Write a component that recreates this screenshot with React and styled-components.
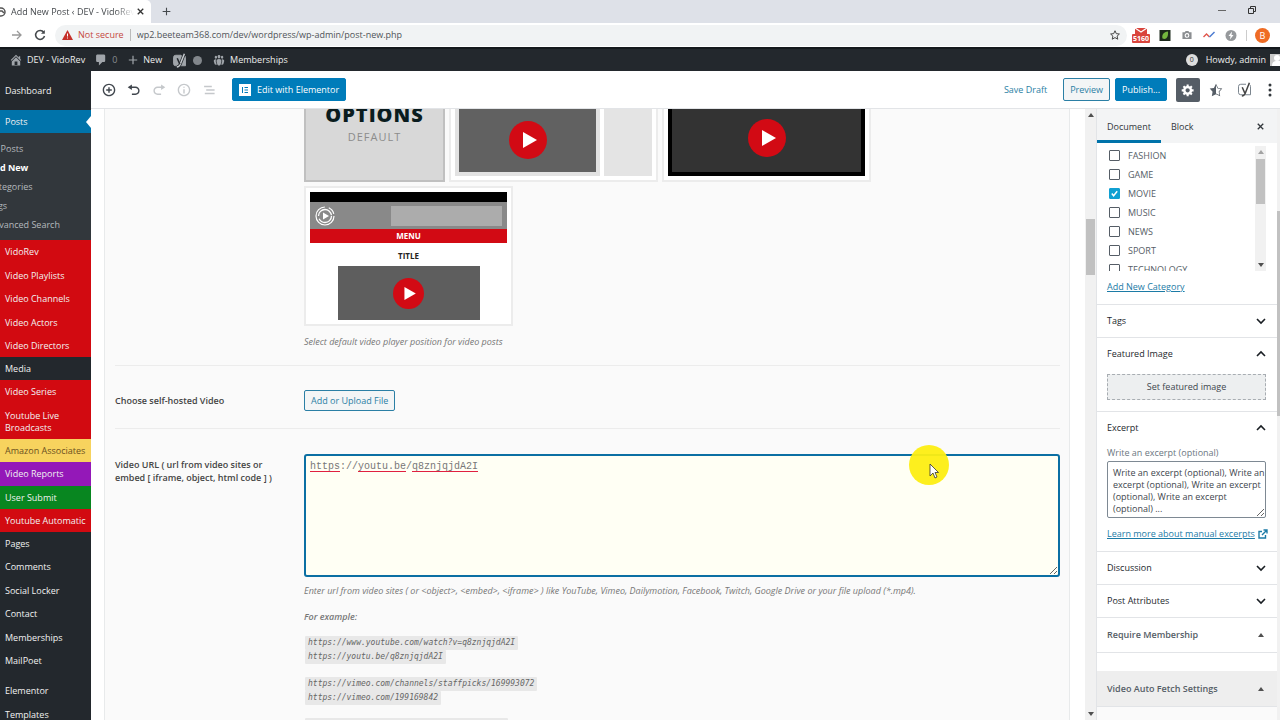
import React, { useState } from "react";
import styled, { createGlobalStyle, css } from "styled-components";

const GlobalStyle = createGlobalStyle`
  * {
    box-sizing: border-box;
  }
  body {
    margin: 0;
    font-family: "Open Sans", "Noto Sans", sans-serif;
    font-size: 9px;
    line-height: 12px;
    color: #32373c;
    background: #fff;
  }
  button, input, textarea {
    font: inherit;
    margin: 0;
  }
  button {
    padding: 0;
    border: 0;
    background: none;
    color: inherit;
  }
  svg {
    display: block;
    flex: none;
  }
`;

const ICONS = {
  undo: "M12 5H7V2L1 6l6 4V7h5c2.2 0 4 1.8 4 4s-1.8 4-4 4H7v2h5c3.3 0 6-2.7 6-6s-2.7-6-6-6z",
  redo: "M8 5h5V2l6 4-6 4V7H8c-2.2 0-4 1.8-4 4s1.8 4 4 4h5v2H8c-3.3 0-6-2.7-6-6s2.7-6 6-6z",
  insert:
    "M10 1c-5 0-9 4-9 9s4 9 9 9 9-4 9-9-4-9-9-9zm0 16c-3.9 0-7-3.1-7-7s3.1-7 7-7 7 3.1 7 7-3.1 7-7 7zm1-11H9v3H6v2h3v3h2v-3h3V9h-3V6z",
  info: "M9 15h2V9H9v6zm1-10c-.5 0-1 .5-1 1s.5 1 1 1 1-.5 1-1-.5-1-1-1zm0-4c-5 0-9 4-9 9s4 9 9 9 9-4 9-9-4-9-9-9zm0 16c-3.9 0-7-3.1-7-7s3.1-7 7-7 7 3.1 7 7-3.1 7-7 7z",
  outline: "M3 4h11v2H3zM6 9h12v2H6zM4 14h14v2H4z",
  close:
    "M14.95 6.46L11.41 10l3.54 3.54-1.41 1.41L10 11.42l-3.53 3.53-1.42-1.42L8.58 10 5.05 6.47l1.42-1.42L10 8.58l3.54-3.53z",
  gear: "M18 12h-2.18c-.17.7-.44 1.35-.81 1.93l1.54 1.54-2.1 2.1-1.54-1.54c-.58.36-1.23.63-1.91.79V19H8v-2.18c-.68-.16-1.33-.43-1.91-.79l-1.54 1.54-2.12-2.12 1.54-1.54c-.36-.58-.63-1.23-.79-1.91H1V9.03h2.17c.16-.7.44-1.35.8-1.94L2.43 5.55l2.1-2.1 1.54 1.54c.58-.37 1.24-.64 1.93-.81V2h3v2.18c.68.16 1.33.43 1.91.79l1.54-1.54 2.12 2.12-1.54 1.54c.36.59.64 1.24.8 1.94H18V12zm-8.5 1.5c1.66 0 3-1.34 3-3s-1.34-3-3-3-3 1.34-3 3 1.34 3 3 3z",
  starHalf:
    "M10 1L7 7l-6 .75 4.13 4.62L4 19l6-3 6 3-1.12-6.63L19 7.75 13 7zm0 2.24l2.34 4.69 4.65.58-3.18 3.56.87 5.15L10 14.88V3.24z",
  home: "M16 8.5l1.53 1.53-1.06 1.06L10 4.6l-6.47 6.49-1.06-1.06L10 2.5l4 4v-2h2v4zm-6-2.46l6 5.99V18H4v-5.97zM12 17v-5H8v5h4z",
  comment: "M5 2h9c1.1 0 2 .9 2 2v7c0 1.1-.9 2-2 2h-2l-5 5v-5H5c-1.1 0-2-.9-2-2V4c0-1.1.9-2 2-2z",
  plus: "M17 9v2h-6v6H9v-6H3V9h6V3h2v6h6z",
  groups:
    "M8.03 4.46c-.29 1.28.55 3.46 1.97 3.46 1.41 0 2.25-2.18 1.96-3.46-.22-.98-1.08-1.63-1.96-1.63-.89 0-1.74.65-1.97 1.63zm-4.13.9c-.25 1.08.47 2.93 1.67 2.93s1.92-1.85 1.67-2.93c-.19-.83-.92-1.39-1.67-1.39s-1.48.56-1.67 1.39zm8.86 0c-.25 1.08.47 2.93 1.66 2.93 1.2 0 1.92-1.85 1.67-2.93-.19-.83-.92-1.39-1.67-1.39-.74 0-1.47.56-1.66 1.39zm-.59 11.43l1.25-4.3C14.2 10 12.71 8.47 10 8.47c-2.72 0-4.21 1.53-3.44 4.02l1.26 4.3C8.05 17.51 9 18 10 18c.98 0 1.94-.49 2.17-1.21zm-6.1-7.63c-.49.67-.96 1.83-.42 3.59l1.12 3.79c-.34.2-.77.31-1.2.31-.85 0-1.65-.41-1.85-1.03l-1.07-3.65c-.65-2.11.61-3.4 2.92-3.4.27 0 .54.02.79.06-.1.1-.2.22-.29.33zm8.35-.39c2.31 0 3.58 1.29 2.92 3.4l-1.07 3.65c-.2.62-1 1.03-1.85 1.03-.43 0-.86-.11-1.2-.31l1.11-3.77c.55-1.78.08-2.94-.42-3.61-.08-.11-.18-.23-.28-.33.25-.04.51-.06.79-.06z",
};

const Icon = ({ name, size = 14 }) => (
  <svg width={size} height={size} viewBox="0 0 20 20" fill="currentColor" aria-hidden="true">
    <path d={ICONS[name]} />
  </svg>
);

const YoastIcon = ({ filled }) => (
  <svg width="15" height="15" viewBox="0 0 20 20" fill="none" aria-hidden="true">
    <path
      d="M12 3H5a3 3 0 0 0-3 3v8a3 3 0 0 0 3 3h13V6c0-1-.4-2-1.200-2.500"
      fill={filled ? "#a0a5aa" : "none"}
      stroke={filled ? "#a0a5aa" : "#6c7781"}
      strokeWidth="1.200"
    />
    <path d="M16.500 1L11 15c-1 2.600-2 3.500-4.500 3.600" stroke={filled ? "#23282d" : "#444"} strokeWidth={filled ? 4 : 2} />
    {filled && <path d="M16.500 1L11 15c-1 2.600-2 3.500-4.500 3.600" stroke="#c5c9cd" strokeWidth="2" />}
    <path d="M7 7l3.500 8" stroke={filled ? "#23282d" : "#444"} strokeWidth="2" />
  </svg>
);

const Chevron = ({ up }) => (
  <svg width="10" height="10" viewBox="0 0 10 10" fill="none" stroke="#191e23" strokeWidth="1.600" aria-hidden="true">
    <path d={up ? "M1 7l4-4 4 4" : "M1 3l4 4 4-4"} />
  </svg>
);

const Triangle = ({ down, color = "#505050" }) => (
  <svg width="6" height="4" viewBox="0 0 6 4" fill={color} aria-hidden="true">
    <path d={down ? "M0 0h6L3 4z" : "M0 4h6L3 0z"} />
  </svg>
);

const Page = styled.div`
  display: flex;
  flex-direction: column;
  height: 100vh;
  overflow: hidden;
`;

/* browser window */
const TabStrip = styled.div`
  display: flex;
  align-items: center;
  height: 23px;
  flex: none;
  background: #dee1e8;
  color: #45494d;
`;

const Tab = styled.div`
  display: flex;
  align-items: center;
  width: 151px;
  height: 23px;
  margin-right: 10px;
  background: #fff;
  border-radius: 0 5px 0 0;
  overflow: hidden;
`;

const TabTitle = styled.span`
  flex: 1;
  margin-left: 5px;
  overflow: hidden;
  white-space: nowrap;
  mask-image: linear-gradient(to right, #000 85%, transparent);
`;

const TabClose = styled.button`
  margin-right: 4px;
  color: #333;
`;

const WindowControls = styled.div`
  display: flex;
  align-items: center;
  gap: 22px;
  margin-left: auto;
  padding: 0 24px 4px 0;
`;

const AddressRow = styled.div`
  display: flex;
  align-items: center;
  height: 26px;
  flex: none;
  padding: 0 10px 0 11px;
  background: #fff;
  border-bottom: 2px solid #15191d;
  color: #5f6368;
`;

const NavIcons = styled.div`
  display: flex;
  align-items: center;
  gap: 12px;
  width: 44px;
`;

const AddressBar = styled.div`
  display: flex;
  align-items: center;
  flex: 1;
  height: 21px;
  padding: 0 7px;
  background: #f1f3f4;
  border-radius: 11px;
`;

const NotSecure = styled.span`
  margin-left: 5px;
  padding-right: 6px;
  color: #c5483e;
  border-right: 1px solid #bbb;
`;

const AddressInput = styled.input`
  flex: 1;
  min-width: 0;
  padding: 0 0 0 6px;
  border: 0;
  outline: 0;
  background: none;
  color: #505458;
`;

const Extensions = styled.div`
  display: flex;
  align-items: center;
  gap: 8px;
  margin-left: 5px;
`;

const Profile = styled.button`
  width: 15px;
  height: 15px;
  border-radius: 50%;
  background: #ef6c24;
  color: #fff;
  line-height: 15px;
`;

/* admin bar */
const AdminBar = styled.nav`
  display: flex;
  align-items: center;
  height: 22px;
  flex: none;
  padding-left: 9px;
  overflow: hidden;
  background: #23282d;
  color: #a0a5aa;
`;

const BarLink = styled.a`
  display: flex;
  align-items: center;
  gap: 4px;
  margin-right: ${(p) => p.$gap || 9}px;
  color: ${(p) => (p.$muted ? "#888d92" : "#eee")};
  text-decoration: none;
  white-space: nowrap;
  svg {
    color: #a0a5aa;
  }
`;

const Dot = styled.span`
  width: 9px;
  height: 9px;
  margin-right: 10px;
  border-radius: 50%;
  background: #82878c;
`;

const Account = styled.div`
  display: flex;
  align-items: center;
  margin-left: auto;
  color: #eee;
`;

const CountBadge = styled.span`
  width: 12px;
  height: 12px;
  margin-right: 8px;
  border-radius: 50%;
  background: #ddd;
  color: #333;
  font-size: 7px;
  text-align: center;
`;

const Columns = styled.div`
  display: flex;
  flex: 1;
  min-height: 0;
`;

/* admin menu */
const Menu = styled.nav`
  width: 91px;
  flex: none;
  padding-top: 8px;
  overflow: hidden;
  background: #23282d;
`;

const MENU_COLORS = {
  dark: "#23282d",
  blue: "#0073aa",
  red: "#d20a11",
  yellow: "#f7d35e",
  purple: "#9418b8",
  green: "#088620",
};

const MenuGroup = styled.div`
  display: flex;
  flex-direction: column;
  justify-content: space-between;
  min-height: ${(p) => p.$height}px;
  margin-bottom: ${(p) => p.$after || 0}px;
  background: ${(p) => MENU_COLORS[p.$color]};
`;

const MenuLink = styled.a`
  position: relative;
  display: block;
  padding: 6px 0 5px 5px;
  background: ${(p) => MENU_COLORS[p.$color]};
  color: ${(p) => (p.$color === "yellow" ? "#6b5020" : "#f1f1f1")};
  font-weight: ${(p) => (p.$color === "yellow" ? 400 : 500)};
  text-decoration: none;
  white-space: ${(p) => (p.$wrap ? "normal" : "nowrap")};
  ${(p) =>
    p.$current &&
    css`
      &::after {
        content: "";
        position: absolute;
        right: 0;
        top: 6px;
        border: 6px solid transparent;
        border-left: 0;
        border-right: 5px solid #fff;
      }
    `}
`;

const SubMenu = styled.div`
  margin-left: -12px;
  padding: 7px 0 5px;
  background: #32373c;
`;

const SubLink = styled.a`
  display: block;
  padding: 3px 0 4px;
  color: ${(p) => (p.$current ? "#fff" : "#b4b9be")};
  font-weight: ${(p) => (p.$current ? 700 : 400)};
  text-decoration: none;
  white-space: nowrap;
`;

/* editor */
const Editor = styled.div`
  display: flex;
  flex-direction: column;
  flex: 1;
  min-width: 0;
`;

const Toolbar = styled.div`
  display: flex;
  align-items: center;
  height: 38px;
  flex: none;
  padding-left: 5px;
  background: #fff;
  border-bottom: 1px solid #e2e4e7;
`;

const ToolButton = styled.button`
  display: flex;
  align-items: center;
  justify-content: center;
  width: 25px;
  height: 24px;
  color: ${(p) => (p.disabled ? "#c5c8cb" : "#40464d")};
`;

const Button = styled.button`
  display: flex;
  align-items: center;
  gap: 6px;
  height: ${(p) => p.$height || 23}px;
  padding: 0 6px;
  border: 1px solid ${(p) => (p.$primary ? "#007cba" : "#2b7fa5")};
  border-radius: 2px;
  background: ${(p) => (p.$primary ? "#007cba" : "#f3f5f6")};
  color: ${(p) => (p.$primary ? "#fff" : "#2b7fa5")};
  white-space: nowrap;
`;

const ElementorWrap = styled.div`
  margin-left: 11px;
`;

const ToolbarActions = styled.div`
  display: flex;
  align-items: center;
  gap: 5px;
  margin-left: auto;
`;

const TextButton = styled.button`
  margin-right: 11px;
  color: #2b7fa5;
`;

const PanelToggles = styled.div`
  display: flex;
  align-items: center;
  gap: 4px;
  margin-left: 4px;
`;

const PanelToggle = styled.button`
  display: flex;
  align-items: center;
  justify-content: center;
  width: 24px;
  height: 24px;
  border-radius: 2px;
  background: ${(p) => (p.$active ? "#555d66" : "none")};
  color: ${(p) => (p.$active ? "#fff" : "#555d66")};
`;

const MoreButton = styled(PanelToggle)`
  width: 20px;
  color: #32373c;
`;

const EditorBody = styled.div`
  display: flex;
  flex: 1;
  min-height: 0;
`;

const MetaArea = styled.main`
  flex: 1;
  min-width: 0;
  padding: 0 15px 0 13px;
  overflow: hidden;
`;

const MetaBox = styled.div`
  height: 100%;
  padding: 0 9px 0 10px;
  overflow: hidden;
  background: #fafafa;
  border-left: 1px solid #e8eaeb;
  border-right: 1px solid #e8eaeb;
`;

const FieldRow = styled.section`
  display: grid;
  grid-template-columns: 189px minmax(0, 1fr);
  padding: ${(p) => p.$top || 0}px 0 ${(p) => p.$bottom || 0}px;
  border-bottom: 1px solid #ececec;
`;

const FieldLabel = styled.label`
  padding-top: 4px;
  color: #444;
  font-weight: 600;
  line-height: 13px;
`;

const Hint = styled.p`
  margin: ${(p) => p.$top}px 0 0;
  color: #777;
  font-style: italic;
  font-weight: ${(p) => (p.$strong ? 600 : 400)};
`;

const ClippedThumbs = styled.div`
  display: flex;
  align-items: flex-end;
  gap: 4px;
  height: 73px;
  overflow: hidden;
`;

const Thumb = styled.button`
  display: flex;
  width: 209px;
  height: 140px;
  flex: none;
  padding: 4px;
  border: 2px solid #ececec;
  background: #fff;
`;

const DefaultThumb = styled(Thumb)`
  flex-direction: column;
  align-items: center;
  justify-content: flex-end;
  width: 141px;
  padding-bottom: 34px;
  background: #d8d8d8;
  border-color: #c0c0c0;
`;

const ThumbHeading = styled.span`
  color: #0a1c1e;
  font-size: 20px;
  font-weight: 800;
  line-height: 26px;
  letter-spacing: 1px;
`;

const ThumbSub = styled.span`
  color: #8c8c8c;
  font-size: 11px;
  line-height: 18px;
  letter-spacing: 1px;
`;

const SidebarThumb = styled(Thumb)`
  align-items: flex-end;
  justify-content: space-between;
`;

const Frame = styled.span`
  display: flex;
  align-items: flex-end;
  align-self: stretch;
  flex: 1;
  padding: 4px;
  background: ${(p) => p.$color};
`;

const Aside = styled.span`
  align-self: stretch;
  width: 48px;
  margin: 0 0 0 4px;
  background: #e4e4e4;
`;

const Screen = styled.span`
  display: flex;
  align-items: center;
  justify-content: center;
  width: 100%;
  height: ${(p) => p.$height}px;
  background: ${(p) => p.$color};
`;

const SiteThumb = styled(Thumb)`
  flex-direction: column;
  align-items: stretch;
  margin-top: 4px;
`;

const SiteTop = styled.span`
  height: 10px;
  background: #000;
`;

const SiteHeader = styled.span`
  display: flex;
  align-items: center;
  justify-content: space-between;
  height: 27px;
  padding: 0 5px;
  background: #898989;
`;

const SiteAd = styled.span`
  width: 111px;
  height: 20px;
  background: #acacac;
`;

const SiteMenu = styled.span`
  height: 14px;
  background: #d20a14;
  color: #fff;
  font-size: 8px;
  font-weight: 700;
  line-height: 14px;
`;

const SiteTitle = styled.span`
  height: 23px;
  color: #222;
  font-size: 8px;
  font-weight: 700;
  line-height: 26px;
`;

const SitePlayer = styled.span`
  display: flex;
  align-items: center;
  justify-content: center;
  width: 142px;
  height: 54px;
  margin: 0 auto;
  background: #5e5e5e;
`;

const UrlField = styled.div`
  position: relative;
`;

const UrlTextarea = styled.textarea`
  display: block;
  width: 100%;
  height: 123px;
  padding: 5px 4px;
  border: 2px solid #0b6fa3;
  border-radius: 3px;
  outline: 0;
  background: #fffff4;
  color: #777;
  font-family: "Liberation Mono", monospace;
  font-size: 10px;
  line-height: 12px;
`;

/* marks under the words the spell checker does not know */
const SpellMarks = styled.div`
  position: absolute;
  z-index: 1;
  top: 7px;
  left: 6px;
  display: flex;
  height: 11px;
  font-family: "Liberation Mono", monospace;
  font-size: 10px;
  pointer-events: none;
`;

const SpellMark = styled.span`
  width: ${(p) => p.$chars}ch;
  border-bottom: ${(p) => (p.$known ? "0" : "1px solid #e02040")};
`;

const CodeGroup = styled.div`
  display: flex;
  flex-direction: column;
  align-items: flex-start;
  margin-top: 13px;
`;

const Code = styled.code`
  padding: 0 3px;
  margin-left: 1px;
  background: #e8e8e8;
  border-radius: 1px;
  color: #666;
  font-family: "DejaVu Sans Mono", monospace;
  font-size: 8px;
  font-style: italic;
  line-height: 14px;
`;

/* scroll bars */
const ScrollBar = styled.div`
  display: flex;
  flex-direction: column;
  align-items: center;
  width: ${(p) => p.$width}px;
  flex: none;
  padding: ${(p) => p.$pad || 0}px 0;
  background: #f1f1f1;
`;

const ScrollThumb = styled.div`
  width: ${(p) => p.$width}px;
  height: ${(p) => p.$height}px;
  margin-top: ${(p) => p.$top}px;
  background: #c1c1c1;
`;

const Spacer = styled.div`
  flex: 1;
`;

/* settings sidebar */
const Sidebar = styled.aside`
  width: 181px;
  flex: none;
  overflow: hidden;
  background: #fff;
  border-left: 1px solid #e2e4e7;
`;

const SidebarTabs = styled.div`
  display: flex;
  align-items: stretch;
  height: 34px;
  padding-right: 10px;
  background: #f3f4f5;
`;

const SidebarTab = styled.button`
  padding: 4px 10px 0;
  border-bottom: 3px solid ${(p) => (p.$active ? "#0073aa" : "transparent")};
  font-weight: ${(p) => (p.$active ? 500 : 400)};
`;

const CloseButton = styled.button`
  margin-left: auto;
  padding-top: 1px;
`;

const Panel = styled.section`
  padding: 0 11px ${(p) => p.$bottom || 0}px 10px;
  border-bottom: 1px solid #e2e4e7;
`;

const PanelTitle = styled.button`
  display: flex;
  align-items: center;
  justify-content: space-between;
  width: 100%;
  height: 32px;
  color: #23282d;
  font-weight: 500;
`;

const CategoryBox = styled.div`
  display: flex;
  height: 125px;
  margin: 3px 0 10px;
  overflow: hidden;
`;

const CategoryList = styled.div`
  flex: 1;
  padding-left: 2px;
`;

const CategoryItem = styled.label`
  display: flex;
  align-items: center;
  gap: 8px;
  height: 19px;
  color: #555d66;
`;

const Check = styled.input`
  appearance: none;
  width: 11px;
  height: 11px;
  border: 1px solid #555d66;
  border-radius: 1px;
  background: #fff;
  &:checked {
    border-color: #11a0d2;
    background: #11a0d2
      url("data:image/svg+xml,%3Csvg xmlns='http://www.w3.org/2000/svg' viewBox='0 0 10 10' fill='none' stroke='white' stroke-width='1.600'%3E%3Cpath d='M2 5l2 2.500L8 2.500'/%3E%3C/svg%3E");
  }
`;

const TextLink = styled.a`
  display: inline-flex;
  align-items: center;
  gap: 3px;
  color: #1c7ba6;
  white-space: nowrap;
`;

const FeaturedButton = styled.button`
  width: 100%;
  height: 26px;
  margin-top: 4px;
  border: 1px dashed #a8adb2;
  background: #edeff0;
  color: #40464d;
`;

const ExcerptLabel = styled.label`
  display: block;
  margin: 3px 0 2px;
  color: #6c7781;
`;

const ExcerptInput = styled.textarea`
  display: block;
  width: 100%;
  height: 57px;
  margin-bottom: 10px;
  padding: 5px 0 0 5px;
  border: 1px solid #7e8993;
  border-radius: 2px;
  background: #fff;
  color: #40464d;
  overflow: hidden;
`;

const LegacyTitle = styled.button`
  display: flex;
  align-items: center;
  justify-content: space-between;
  width: 100%;
  height: ${(p) => (p.$shaded ? 36 : 35)}px;
  margin-top: ${(p) => (p.$shaded ? 18 : 0)}px;
  padding: 0 13px 0 10px;
  border-bottom: 1px solid #e2e4e7;
  background: ${(p) => (p.$shaded ? "#eee" : "#fff")};
  color: #555d66;
  font-weight: 600;
`;

const LegacyBody = styled.div`
  height: 20px;
  background: #fafafa;
`;

const Pointer = styled.div`
  position: fixed;
  left: 909px;
  top: 445px;
  pointer-events: none;
`;

const PlayMark = ({ size }) => (
  <svg width={size} height={size} viewBox="0 0 38 38" aria-hidden="true">
    <circle cx="19" cy="19" r="19" fill="#d20a14" />
    <path d="M14 11l14 8-14 8z" fill="#fff" />
  </svg>
);

const MENU = [
  { color: "red", height: 117, items: ["VidoRev", "Video Playlists", "Video Channels", "Video Actors", "Video Directors"] },
  { color: "dark", height: 23, items: ["Media"] },
  { color: "red", height: 59, items: ["Video Series", "Youtube Live Broadcasts"] },
  { color: "yellow", height: 23, items: ["Amazon Associates"] },
  { color: "purple", height: 24, items: ["Video Reports"] },
  { color: "green", height: 23, items: ["User Submit"] },
  { color: "red", height: 23, items: ["Youtube Automatic"] },
  { color: "dark", height: 140, after: 7, items: ["Pages", "Comments", "Social Locker", "Contact", "Memberships", "MailPoet"] },
  { color: "dark", height: 47, items: ["Elementor", "Templates"] },
];

const SUB_MENU = ["All Posts", "Add New", "Categories", "Tags", "Advanced Search"];

const CATEGORIES = ["FASHION", "GAME", "MOVIE", "MUSIC", "NEWS", "SPORT", "TECHNOLOGY"];

const EXAMPLES = [
  ["https://www.youtube.com/watch?v=q8znjqjdA2I", "https://youtu.be/q8znjqjdA2I"],
  ["https://vimeo.com/channels/staffpicks/169993072", "https://vimeo.com/199169842"],
  ["https://www.dailymotion.com/video/x6kuu5a"],
];

const BrowserChrome = () => (
  <>
    <TabStrip>
      <Tab>
        <svg width="6" height="10" viewBox="4 0 6 10" fill="none" stroke="#555" strokeWidth="1.500" aria-hidden="true">
          <circle cx="5" cy="5" r="4" />
          <path d="M3 4h3l2 2" />
        </svg>
        <TabTitle>Add New Post ‹ DEV - VidoRev —</TabTitle>
        <TabClose aria-label="Close tab">
          <Icon name="close" size={13} />
        </TabClose>
      </Tab>
      <button aria-label="New tab">
        <Icon name="plus" size={11} />
      </button>
      <WindowControls>
        <svg width="8" height="8" viewBox="0 0 8 8" stroke="#666" aria-hidden="true">
          <path d="M0 4.500h8" />
        </svg>
        <svg width="8" height="8" viewBox="0 0 8 8" fill="none" stroke="#333" aria-hidden="true">
          <path d="M.5 2.500h5v5h-5zM2.500 2.500v-2h5v5h-2" />
        </svg>
      </WindowControls>
    </TabStrip>
    <AddressRow>
      <NavIcons>
        <svg width="11" height="10" viewBox="0 0 11 10" fill="none" stroke="#999" strokeWidth="1.300" aria-hidden="true">
          <path d="M1 5h9M6 1l4 4-4 4" />
        </svg>
        <svg width="12" height="12" viewBox="0 0 12 12" fill="none" stroke="#44484c" strokeWidth="1.500" aria-hidden="true">
          <path d="M9.800 3.300A4.500 4.500 0 1 0 10.500 7" />
          <path d="M10.800 1v3.800H7z" fill="#44484c" stroke="none" />
        </svg>
      </NavIcons>
      <AddressBar>
        <svg width="11" height="10" viewBox="0 0 11 10" aria-hidden="true">
          <path d="M5.500 0L11 10H0z" fill="#c5302a" />
          <path d="M5.500 3.500v3M5.500 7.500v1" stroke="#fff" />
        </svg>
        <NotSecure>Not secure</NotSecure>
        <AddressInput aria-label="Address" defaultValue="wp2.beeteam368.com/dev/wordpress/wp-admin/post-new.php" />
        <svg width="10" height="10" viewBox="0 0 20 20" fill="none" stroke="#444" strokeWidth="2" aria-hidden="true">
          <path d="M10 1.500l2.600 5.800 6.200.7-4.600 4.200 1.300 6.200L10 15.200l-5.500 3.200 1.300-6.200L1.200 8l6.200-.7z" />
        </svg>
      </AddressBar>
      <Extensions>
        <svg width="18" height="16" viewBox="0 0 18 16" role="img" aria-label="5160">
          <path d="M3 1h12v6H3z" fill="#d9453d" />
          <path d="M3 1l6 4 6-4" fill="none" stroke="#fff" strokeWidth="1.200" />
          <rect y="7" width="18" height="9" rx="1" fill="#d9453d" />
          <text x="9" y="14" fill="#fff" fontSize="7" fontWeight="700" textAnchor="middle">5160</text>
        </svg>
        <svg width="14" height="11" viewBox="0 0 11 11" aria-hidden="true">
          <path d="M0 0h11v11H0z" fill="#1d2a1c" />
          <path d="M8.500 1.500C4 2 2 4.500 3 8.500c3.500 1.500 6-1 5.500-7z" fill="#74b73e" />
        </svg>
        <svg width="14" height="10" viewBox="0 0 12 11" aria-hidden="true">
          <path d="M1 2.500h2.500l1-1.500h3l1 1.500H11v7.500H1z" fill="#8b8e91" />
          <circle cx="6" cy="6" r="2" fill="none" stroke="#fff" strokeWidth="1.200" />
        </svg>
        <svg width="14" height="8" viewBox="0 0 11 8" fill="none" strokeWidth="1.400" aria-hidden="true">
          <path d="M0 6l3-3 3 3" stroke="#e2574c" />
          <path d="M6 6l5-5" stroke="#4a7ad1" />
        </svg>
        <svg width="14" height="11" viewBox="0 0 11 11" aria-hidden="true">
          <circle cx="5.500" cy="5.500" r="5.500" fill="#96999c" />
          <path d="M6.500 1.500L3 6h2l-.5 3.500L8 5H6z" fill="#fff" />
        </svg>
        <svg width="1" height="11" viewBox="0 0 1 11" aria-hidden="true">
          <path d="M0 0h1v11H0z" fill="#ccc" />
        </svg>
        <Profile>B</Profile>
      </Extensions>
    </AddressRow>
  </>
);

const AdminTop = () => (
  <AdminBar>
    <BarLink href="#site">
      <Icon name="home" />
      DEV - VidoRev
    </BarLink>
    <BarLink href="#comments" $muted $gap={10}>
      <Icon name="comment" />0
    </BarLink>
    <BarLink href="#new" $gap={10}>
      <Icon name="plus" size={12} />
      New
    </BarLink>
    <BarLink href="#seo" $gap={6}>
      <YoastIcon filled />
    </BarLink>
    <Dot />
    <BarLink href="#members">
      <Icon name="groups" />
      Memberships
    </BarLink>
    <Account>
      <CountBadge>0</CountBadge>
      <BarLink href="#profile" $gap={4}>
        Howdy, admin
      </BarLink>
      <svg width="10" height="12" viewBox="0 0 10 12" aria-hidden="true">
        <path d="M0 0h10v12H0z" fill="#c9c9c9" />
        <circle cx="7" cy="4" r="3" fill="#fff" />
        <path d="M2 12c0-4 2-5 5-5h3v5z" fill="#fff" />
      </svg>
    </Account>
  </AdminBar>
);

const AdminMenu = () => (
  <Menu>
    <MenuGroup $color="dark" $height={23} $after={8}>
      <MenuLink href="#dashboard" $color="dark">Dashboard</MenuLink>
    </MenuGroup>
    <MenuLink href="#posts" $color="blue" $current>Posts</MenuLink>
    <SubMenu>
      {SUB_MENU.map((item) => (
        <SubLink key={item} href="#posts" $current={item === "Add New"}>
          {item}
        </SubLink>
      ))}
    </SubMenu>
    {MENU.map((group, idx) => (
      <MenuGroup key={`group-${idx}`} $color={group.color} $height={group.height} $after={group.after}>
        {group.items.map((item) => (
          <MenuLink key={item} href="#menu" $color={group.color} $wrap={item === "Youtube Live Broadcasts"}>
            {item}
          </MenuLink>
        ))}
      </MenuGroup>
    ))}
  </Menu>
);

const EditorToolbar = () => (
  <Toolbar>
    <ToolButton aria-label="Add block"><Icon name="insert" /></ToolButton>
    <ToolButton aria-label="Undo"><Icon name="undo" /></ToolButton>
    <ToolButton aria-label="Redo" disabled><Icon name="redo" /></ToolButton>
    <ToolButton aria-label="Content structure" disabled><Icon name="info" /></ToolButton>
    <ToolButton aria-label="Block navigation" disabled><Icon name="outline" /></ToolButton>
    <ElementorWrap>
      <Button $primary>
        <svg width="12" height="12" viewBox="0 0 12 12" aria-hidden="true">
          <path d="M0 0h12v12H0z" fill="#fff" />
          <path d="M3.500 3v6M5.500 3.500h3.500M5.500 6h3.500M5.500 8.500h3.500" stroke="#007cba" />
        </svg>
        Edit with Elementor
      </Button>
    </ElementorWrap>
    <ToolbarActions>
      <TextButton>Save Draft</TextButton>
      <Button>Preview</Button>
      <Button $primary>Publish...</Button>
      <PanelToggles>
        <PanelToggle $active aria-label="Settings"><Icon name="gear" /></PanelToggle>
        <PanelToggle aria-label="Elementor"><Icon name="starHalf" /></PanelToggle>
        <PanelToggle aria-label="Yoast SEO"><YoastIcon /></PanelToggle>
        <MoreButton aria-label="More">
          <svg width="4" height="14" viewBox="0 0 4 14" fill="currentColor" aria-hidden="true">
            <circle cx="2" cy="2" r="1.500" />
            <circle cx="2" cy="7" r="1.500" />
            <circle cx="2" cy="12" r="1.500" />
          </svg>
        </MoreButton>
      </PanelToggles>
    </ToolbarActions>
  </Toolbar>
);

const PlayerPosition = () => (
  <FieldRow $bottom={17}>
    <span />
    <div>
      <ClippedThumbs>
        <DefaultThumb>
          <ThumbHeading>OPTIONS</ThumbHeading>
          <ThumbSub>DEFAULT</ThumbSub>
        </DefaultThumb>
        <SidebarThumb aria-label="With sidebar">
          <Frame $color="#e2e2e2">
            <Screen $color="#616161" $height={64}><PlayMark size={38} /></Screen>
          </Frame>
          <Aside />
        </SidebarThumb>
        <Thumb aria-label="Full width">
          <Frame $color="#000">
            <Screen $color="#333" $height={68}><PlayMark size={38} /></Screen>
          </Frame>
        </Thumb>
      </ClippedThumbs>
      <SiteThumb>
        <SiteTop />
        <SiteHeader>
          <svg width="20" height="20" viewBox="0 0 20 20" fill="none" stroke="#fff" aria-hidden="true">
            <circle cx="10" cy="10" r="9" strokeWidth="1.200" strokeDasharray="42 4 8 3" />
            <circle cx="10" cy="10" r="6.500" strokeWidth="1.300" strokeDasharray="17 3 19 2" />
            <path d="M8 6.500l6 3.500-6 3.500z" fill="#fff" stroke="none" />
          </svg>
          <SiteAd />
        </SiteHeader>
        <SiteMenu>MENU</SiteMenu>
        <SiteTitle>TITLE</SiteTitle>
        <SitePlayer><PlayMark size={31} /></SitePlayer>
      </SiteThumb>
      <Hint $top={10}>Select default video player position for video posts</Hint>
    </div>
  </FieldRow>
);

const VideoFields = () => {
  const [url, setUrl] = useState("https://youtu.be/q8znjqjdA2I");

  return (
    <>
      <FieldRow $top={24} $bottom={17}>
        <FieldLabel htmlFor="upload">Choose self-hosted Video</FieldLabel>
        <div>
          <Button id="upload" $height={21}>Add or Upload File</Button>
        </div>
      </FieldRow>
      <FieldRow $top={25}>
        <FieldLabel htmlFor="video-url">
          Video URL ( url from video sites or
          <br />
          embed [ iframe, object, html code ] )
        </FieldLabel>
        <div>
          <UrlField>
            <UrlTextarea id="video-url" spellCheck={false} value={url} onChange={(e) => setUrl(e.target.value)} />
            <SpellMarks>
              <SpellMark $chars={5} />
              <SpellMark $chars={3} $known />
              <SpellMark $chars={8} />
              <SpellMark $chars={1} $known />
              <SpellMark $chars={11} />
            </SpellMarks>
          </UrlField>
          <Hint $top={8}>
            Enter url from video sites ( or &lt;object&gt;, &lt;embed&gt;, &lt;iframe&gt; ) like YouTube, Vimeo,
            Dailymotion, Facebook, Twitch, Google Drive or your file upload (*.mp4).
          </Hint>
          <Hint $top={14} $strong>For example:</Hint>
          {EXAMPLES.map((group) => (
            <CodeGroup key={group[0]}>
              {group.map((link) => (
                <Code key={link}>{link}</Code>
              ))}
            </CodeGroup>
          ))}
        </div>
      </FieldRow>
    </>
  );
};

const SettingsSidebar = () => {
  const [checked, setChecked] = useState(["MOVIE"]);

  const toggle = (name) => {
    setChecked(checked.includes(name) ? checked.filter((c) => c !== name) : [...checked, name]);
  };

  return (
    <Sidebar>
      <SidebarTabs>
        <SidebarTab $active>Document</SidebarTab>
        <SidebarTab>Block</SidebarTab>
        <CloseButton aria-label="Close settings"><Icon name="close" size={13} /></CloseButton>
      </SidebarTabs>
      <Panel $bottom={11}>
        <CategoryBox>
          <CategoryList>
            {CATEGORIES.map((name) => (
              <CategoryItem key={name}>
                <Check type="checkbox" checked={checked.includes(name)} onChange={() => toggle(name)} />
                {name}
              </CategoryItem>
            ))}
          </CategoryList>
          <ScrollBar $width={11} $pad={4}>
            <Triangle color="#a3a3a3" />
            <ScrollThumb $width={9} $height={45} $top={5} />
            <Spacer />
            <Triangle down />
          </ScrollBar>
        </CategoryBox>
        <TextLink href="#category">Add New Category</TextLink>
      </Panel>
      <Panel>
        <PanelTitle>Tags<Chevron /></PanelTitle>
      </Panel>
      <Panel $bottom={11}>
        <PanelTitle>Featured Image<Chevron up /></PanelTitle>
        <FeaturedButton>Set featured image</FeaturedButton>
      </Panel>
      <Panel $bottom={11}>
        <PanelTitle>Excerpt<Chevron up /></PanelTitle>
        <ExcerptLabel htmlFor="excerpt">Write an excerpt (optional)</ExcerptLabel>
        <ExcerptInput
          id="excerpt"
          defaultValue="Write an excerpt (optional), Write an excerpt (optional), Write an excerpt (optional), Write an excerpt (optional) ..."
        />
        <TextLink href="#excerpts">
          Learn more about manual excerpts
          <svg width="10" height="10" viewBox="0 0 10 10" fill="none" stroke="currentColor" strokeWidth="1.400" aria-hidden="true">
            <path d="M4 2.500H1v6.500h6.500V6M5.500 1H9v3.500M9 1L4 6" />
          </svg>
        </TextLink>
      </Panel>
      <Panel>
        <PanelTitle>Discussion<Chevron /></PanelTitle>
      </Panel>
      <Panel>
        <PanelTitle>Post Attributes<Chevron /></PanelTitle>
      </Panel>
      <LegacyTitle>Require Membership<Triangle /></LegacyTitle>
      <LegacyTitle $shaded>Video Auto Fetch Settings<Triangle /></LegacyTitle>
      <LegacyBody />
    </Sidebar>
  );
};

const App = () => (
  <>
    <GlobalStyle />
    <Page>
      <BrowserChrome />
      <AdminTop />
      <Columns>
        <AdminMenu />
        <Editor>
          <EditorToolbar />
          <EditorBody>
            <MetaArea>
              <MetaBox>
                <PlayerPosition />
                <VideoFields />
              </MetaBox>
            </MetaArea>
            <ScrollBar $width={11} $pad={4}>
              <Triangle />
              <ScrollThumb $width={9} $height={56} $top={102} />
              <Spacer />
              <Triangle down />
            </ScrollBar>
            <SettingsSidebar />
            <ScrollBar $width={3}>
              <ScrollThumb $width={3} $height={205} $top={102} />
            </ScrollBar>
          </EditorBody>
        </Editor>
      </Columns>
    </Page>
    <Pointer>
      <svg width="42" height="42" viewBox="0 0 42 42" aria-hidden="true">
        <circle cx="20" cy="20" r="20" fill="#fdee12" opacity="0.950" />
        <path d="M21 19v12l3-3 2 5 2-1-2-4.500h3.500z" fill="#fff" stroke="#333" strokeWidth="0.800" />
      </svg>
    </Pointer>
  </>
);

export default App;
